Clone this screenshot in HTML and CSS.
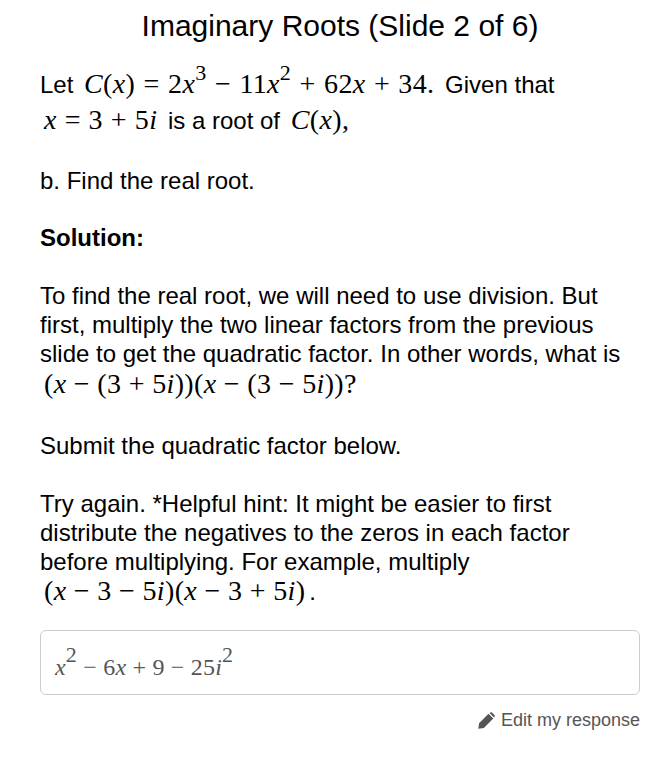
FILE: index.html
```html
<!DOCTYPE html>
<html lang="en">
<head>
<meta charset="utf-8">
<title>Imaginary Roots</title>
<link rel="stylesheet" href="styles.css">
</head>
<body>
<h1 class="title">Imaginary Roots (Slide 2 of 6)</h1>
<div class="content">
  <p class="intro"><span class="line line-first">Let <span class="math math-wide"><i>C</i>(<i>x</i>) = 2<i>x</i><sup>3</sup> − 11<i>x</i><sup>2</sup> + 62<i>x</i> + 34.</span> Given that</span>
  <span class="line line-second"><span class="math math-root"><i>x</i> = 3 + 5<i>i</i></span> is a root of <span class="math"><i>C</i>(<i>x</i>),</span></span></p>
  <p class="after-intro">b. Find the real root.</p>
  <p><strong>Solution:</strong></p>
  <p class="explain">To find the real root, we will need to use division. But<br>first, multiply the two linear factors from the previous<br>slide to get the quadratic factor. In other words, what is<br><span class="line line-math"><span class="math">(<i>x</i> − (3 + 5<i>i</i>))(<i>x</i> − (3 − 5<i>i</i>))?</span></span></p>
  <p class="submit">Submit the quadratic factor below.</p>
  <p class="hint">Try again. *Helpful hint: It might be easier to first<br>distribute the negatives to the zeros in each factor<br>before multiplying. For example, multiply<br><span class="line line-math"><span class="math">(<i>x</i> − 3 − 5<i>i</i>)(<i>x</i> − 3 + 5<i>i</i>)</span>.</span></p>
</div>
<div class="answer"><span class="math answer-math"><i>x</i><sup>2</sup> − 6<i>x</i> + 9 − 25<i>i</i><sup>2</sup></span></div>
<div class="edit">
  <svg class="pencil" viewBox="0 0 16 16" width="17" height="17" aria-hidden="true"><path d="M0.3 15.7l.7-5.2 8.9-8.9 4.5 4.5-8.9 8.9z M10.9 0.9l.8-.5c.5-.3 1-.3 1.4.1l2.4 2.4c.4.4.4.9.1 1.4l-.5.8z"/></svg>
  <span>Edit my response</span>
</div>
</body>
</html>
```
FILE: styles.css
```css
html, body { margin: 0; padding: 0; background: #fff; }
body {
  width: 650px;
  height: 760px;
  overflow: hidden;
  font-family: "Liberation Sans", Arial, sans-serif;
  font-size: 24px;
  line-height: 29px;
  color: #000;
}
.title {
  margin: 0;
  padding-top: 8px;
  font-size: 30px;
  line-height: 36px;
  font-weight: 400;
  text-align: center;
  width: 680px;
}
.content { padding: 0 10px 0 40px; }
.content p { margin: 0 0 29px; white-space: nowrap; }
.intro { padding-top: 26px; }
.content .after-intro { margin-bottom: 28px; }
.content .intro { margin-bottom: 31px; }
.content .explain { margin-bottom: 32px; }
.content .hint { margin-bottom: 24px; }
.line { display: block; }
.line-second { margin-top: 7px; }
.line-math { margin-top: 2px; }
.hint .line-math { margin-top: 1px; }
.math {
  font-family: "Liberation Serif", "Times New Roman", serif;
  font-size: 28px;
  letter-spacing: 0.35px;
  line-height: 0;
  padding: 0 4px;
}
.math-wide { word-spacing: 1px; }
.math-root { word-spacing: 0.5px; }
.math sup { font-size: 22px; line-height: 0; vertical-align: 13px; }
.answer {
  margin: 0 10px 0 40px;
  height: 59px;
  border: 1px solid #ccc;
  border-radius: 6px;
  padding: 0 0 4px 10px;
  display: flex;
  align-items: center;
  box-sizing: content-box;
}
.answer-math { font-size: 24px; color: #555; letter-spacing: 0.2px; }
.edit {
  margin: 12px 10px 0 0;
  display: flex;
  justify-content: flex-end;
  align-items: center;
  gap: 6px;
  font-size: 18px;
  line-height: 26px;
  color: #555;
}
.pencil { fill: #555; }
```
